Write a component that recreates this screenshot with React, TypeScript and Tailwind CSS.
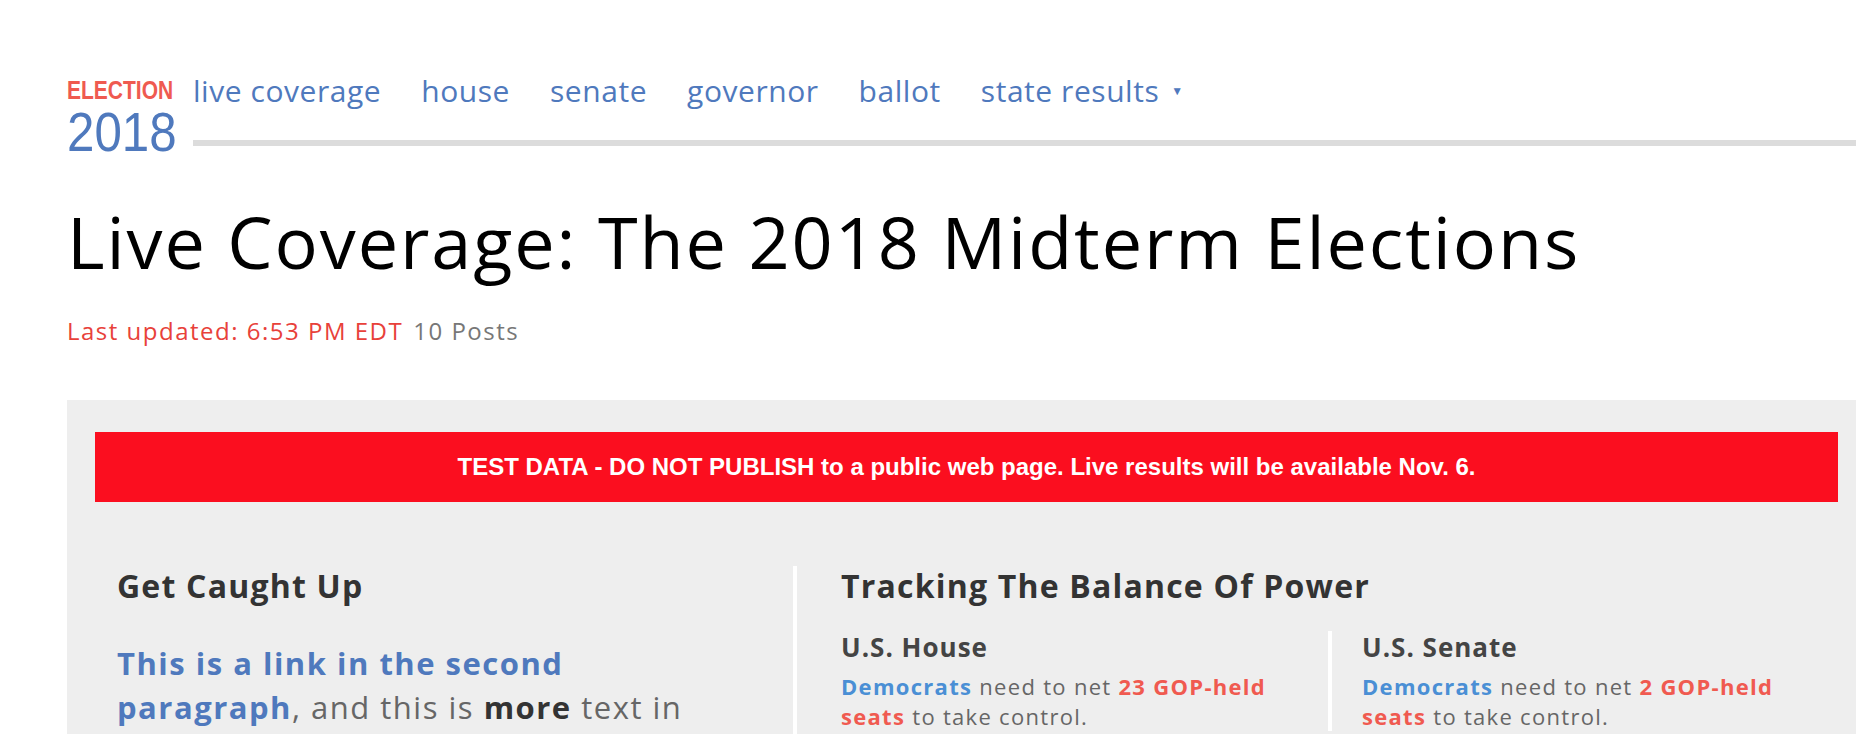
export default function App() {
  const navItems = ["live coverage", "house", "senate", "governor", "ballot"];

  return (
    <div className="min-h-screen bg-white font-['Open_Sans','Lato',sans-serif] overflow-hidden">
      {/* header */}
      <header className="flex items-start pl-[67px] pt-[78px]">
        <div className="w-[106px] flex flex-col font-['Liberation_Sans',Arial,sans-serif] leading-none">
          <span className="inline-block origin-left scale-x-[0.84] text-[25px] font-bold text-[#ef5a50] whitespace-nowrap">ELECTION</span>
          <span className="inline-block origin-left scale-x-[0.88] text-[56px] text-[#4f79bd] mt-[1px]">2018</span>
        </div>
        <div className="flex-1 ml-[20px]">
          <nav className="flex items-center gap-[40px] text-[30px] leading-[34px] tracking-[0.55px] text-[#4f79bd] -mt-[4px]">
            {navItems.map((item) => (
              <a key={item} href="#">{item}</a>
            ))}
            <a href="#" className="flex items-center gap-[12px]">
              state results
              <span className="text-[12px]">▼</span>
            </a>
          </nav>
          <div className="h-[6px] bg-[#dcdcdc] mt-[32px]" />
        </div>
      </header>

      {/* title */}
      <div className="pl-[67px] mt-[36px]">
        <h1 className="text-[72px] leading-[90px] tracking-[1.9px] text-black font-normal whitespace-nowrap">
          Live Coverage: The 2018 Midterm Elections
        </h1>
        <div className="mt-[30px] text-[24px] leading-[30px] tracking-[1.5px]">
          <span className="text-[#e8413a]">Last updated: 6:53 PM EDT</span>
          <span className="text-[#777777] ml-[10px]">10 Posts</span>
        </div>
      </div>

      {/* live panel */}
      <section className="ml-[67px] mt-[54px] bg-[#eeeeee] pl-[28px] pr-[18px] pt-[32px] pb-[40px]">
        <div className="h-[70px] bg-[#fb0e1f] flex items-center justify-center font-['Liberation_Sans',Arial,sans-serif] font-bold text-white text-[24px]">
          TEST DATA - DO NOT PUBLISH to a public web page. Live results will be available Nov. 6.
        </div>

        <div className="flex mt-[64px]">
          <div className="w-[698px] pl-[22px] pr-[62px]">
            <h2 className="text-[32px] font-bold text-[#333333] leading-[40px] tracking-[1.2px]">Get Caught Up</h2>
            <p className="mt-[35px] text-[31px] leading-[44px] tracking-[1.5px] text-[#666666]">
              <a href="#" className="font-bold text-[#4f79bd]">This is a link in the second paragraph</a>, and this is <b className="text-[#333333]">more</b> text in the second paragraph of the summary.
            </p>
          </div>

          <div className="flex-1 border-l-4 border-white pl-[44px]">
            <h2 className="text-[32px] font-bold text-[#333333] leading-[40px] tracking-[1.2px]">Tracking The Balance Of Power</h2>
            <div className="flex mt-[25px]">
              <div className="w-[487px] pr-[30px]">
                <h3 className="text-[26px] font-bold text-[#444444] leading-[32px] tracking-[1px]">U.S. House</h3>
                <p className="mt-[8px] text-[22px] leading-[30px] tracking-[1.3px] text-[#666666]">
                  <b className="text-[#4a8fd5]">Democrats</b> need to net <b className="text-[#f05a50]">23 GOP-held seats</b> to take control.
                </p>
              </div>
              <div className="flex-1 border-l-4 border-white pl-[30px]">
                <h3 className="text-[26px] font-bold text-[#444444] leading-[32px] tracking-[1px]">U.S. Senate</h3>
                <p className="mt-[8px] text-[22px] leading-[30px] tracking-[1.3px] text-[#666666] max-w-[440px]">
                  <b className="text-[#4a8fd5]">Democrats</b> need to net <b className="text-[#f05a50]">2 GOP-held seats</b> to take control.
                </p>
              </div>
            </div>
          </div>
        </div>
      </section>
    </div>
  );
}
